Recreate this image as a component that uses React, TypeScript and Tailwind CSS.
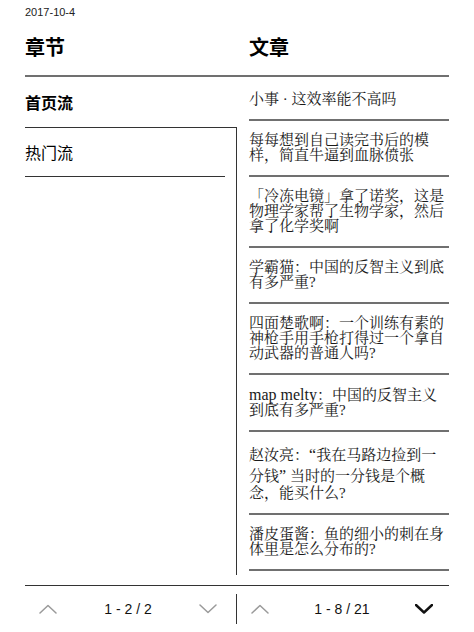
import React from 'react'

const serif = { fontFamily: '"Liberation Serif", "Noto Serif CJK SC", "Noto Sans CJK SC", serif' }

const articles: React.ReactNode[] = [
  '小事 · 这效率能不高吗',
  '每每想到自己读完书后的模样，简直牛逼到血脉偾张',
  '「冷冻电镜」拿了诺奖，这是物理学家帮了生物学家，然后拿了化学奖啊',
  '学霸猫：中国的反智主义到底有多严重?',
  '四面楚歌啊：一个训练有素的神枪手用手枪打得过一个拿自动武器的普通人吗?',
  <>
    <span className="text-[16px]">map melty</span>：中国的反智主义到底有多严重?
  </>,
  <>
    赵汝亮：<span className="text-[16px] leading-[21px]">“</span>我在马路边捡到一分钱
    <span className="text-[16px] leading-[21px]">”</span> 当时的一分钱是个概念，能买什么?
  </>,
  '潘皮蛋酱：鱼的细小的刺在身体里是怎么分布的?',
]

function Chevron({ up, dark }: { up?: boolean; dark?: boolean }) {
  return (
    <svg width="18" height="10" viewBox="0 0 18 10" fill="none">
      <polyline
        points={up ? '1,9 9,1.5 17,9' : '1,1 9,8.5 17,1'}
        stroke={dark ? '#111' : '#9a9a9a'}
        strokeWidth={dark ? 2.4 : 1.5}
        strokeLinecap="round"
        strokeLinejoin="round"
      />
    </svg>
  )
}

export default function App(): React.ReactElement {
  return (
    <div
      className="w-[474px] h-[632px] bg-white text-black flex flex-col px-[25px] overflow-hidden"
      style={{ fontFamily: '"Noto Sans CJK SC", "Liberation Sans", sans-serif' }}
    >
      {/* date */}
      <div className="pt-[5px] text-[11px] leading-[14px] text-[#222]" style={{ fontFamily: '"Liberation Sans", sans-serif' }}>
        2017-10-4
      </div>

      {/* column titles */}
      <div className="flex h-[58px] items-center border-b-2 border-[#707070]">
        <div className="w-[212px] text-[20px] font-bold leading-none">章节</div>
        <div className="ml-[12px] text-[20px] font-bold leading-none">文章</div>
      </div>

      <div className="flex flex-1 min-h-0">
        {/* sections */}
        <div className="w-[212px] flex flex-col pb-[10px]">
          <div className="h-[51px] shrink-0 flex items-center border-b border-[#333] text-[16px] font-bold">首页流</div>
          <div className="flex-1 border-r border-[#333]">
            <div className="mr-[11px] h-[49px] flex items-center border-b border-[#333] text-[16px]">热门流</div>
          </div>
        </div>

        {/* articles */}
        <div className="ml-[12px] w-[200px] flex flex-col" style={serif}>
          {articles.map((a, i) => (
            <div
              key={i}
              className={`border-b-2 border-[#707070] text-[15px] leading-[15px] text-[#1a1a1a] ${i === 0 ? 'pt-[15px] pb-[12px]' : 'py-[12px]'}`}
            >
              {a}
            </div>
          ))}
        </div>
      </div>

      {/* pager */}
      <div className="h-[47px] shrink-0 flex items-center border-t border-[#333] text-[14px] text-[#111]" style={{ fontFamily: '"Liberation Sans", sans-serif' }}>
        <div className="w-[211px] flex items-center justify-between pl-[14px] pr-[19px]">
          <Chevron up />
          <span>1 - 2 / 2</span>
          <Chevron />
        </div>
        <div className="w-px h-[30px] bg-[#333]" />
        <div className="flex-1 flex items-center justify-between pl-[14px] pr-[16px]">
          <Chevron up />
          <span>1 - 8 / 21</span>
          <Chevron up={false} dark />
        </div>
      </div>
    </div>
  )
}
